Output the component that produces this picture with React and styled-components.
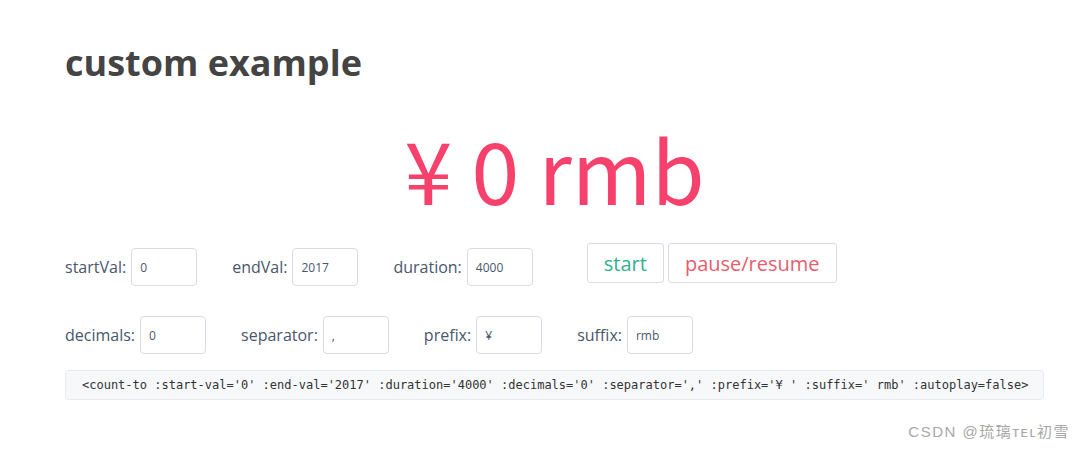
import React from "react";
import styled, { createGlobalStyle } from "styled-components";

const Global = createGlobalStyle`
  html, body { margin: 0; padding: 0; background: #fff; }
  body { font-family: "Open Sans", "Noto Sans CJK SC", sans-serif; color: #48576a; }
`;

const Page = styled.div`
  width: 1086px;
  height: 449px;
  box-sizing: border-box;
  padding: 38px 42px 0 65px;
  position: relative;
  overflow: hidden;
`;

const Title = styled.h1`
  margin: 0;
  font-size: 36px;
  line-height: 50px;
  font-weight: 700;
  color: #444;
`;

const Counter = styled.div`
  margin-top: 30px;
  text-align: center;
  font-size: 86px;
  line-height: 100px;
  color: #f6416c;
  font-family: "Noto Sans CJK SC", "Open Sans", sans-serif;
`;

const Row = styled.div`
  display: flex;
  align-items: center;
  margin-top: ${(p) => p.$top}px;
  height: 44px;
`;

const Field = styled.label`
  display: flex;
  align-items: center;
  gap: 5px;
  margin-right: 35px;
  font-size: 16px;
  color: #48576a;
`;

const Input = styled.input`
  box-sizing: border-box;
  width: 66px;
  height: 38px;
  border: 1px solid #d8dce5;
  border-radius: 4px;
  padding: 0 8px;
  font-size: 12px;
  font-family: "Open Sans", sans-serif;
  color: #48576a;
  outline: none;
`;

const Buttons = styled.div`
  display: flex;
  gap: 4px;
  margin-left: 19px;
  align-self: flex-start;
  margin-top: -2px;
`;

const Button = styled.button`
  box-sizing: border-box;
  height: 40px;
  padding: 0 16px;
  background: #fff;
  border: 1px solid #d8dce5;
  border-radius: 3px;
  font-size: 20px;
  font-family: "Open Sans", sans-serif;
  color: ${(p) => p.$color};
  cursor: pointer;
`;

const Code = styled.pre`
  margin: 13px 0 0;
  box-sizing: border-box;
  height: 30px;
  padding: 0 16px;
  display: flex;
  align-items: center;
  background: #f6f8fa;
  border: 1px solid #e8eaee;
  border-radius: 4px;
  font-family: "DejaVu Sans Mono", monospace;
  font-size: 12px;
  color: #333;
`;

const Watermark = styled.div`
  position: absolute;
  right: 16px;
  bottom: 8px;
  font-size: 15px;
  letter-spacing: 1.5px;
  color: #a8a8a8;
  font-family: "Liberation Sans", "Noto Sans CJK SC", sans-serif;
`;

export default function App() {
  return (
    <>
      <Global />
      <Page>
        <Title>custom example</Title>
        <Counter>¥ 0 rmb</Counter>
        <Row $top={27}>
          <Field>startVal:<Input defaultValue="0" /></Field>
          <Field>endVal:<Input defaultValue="2017" /></Field>
          <Field>duration:<Input defaultValue="4000" /></Field>
          <Buttons>
            <Button $color="#30b08f">start</Button>
            <Button $color="#e65d6e">pause/resume</Button>
          </Buttons>
        </Row>
        <Row $top={24}>
          <Field>decimals:<Input defaultValue="0" /></Field>
          <Field>separator:<Input defaultValue="," /></Field>
          <Field>prefix:<Input defaultValue="¥" /></Field>
          <Field>suffix:<Input defaultValue="rmb" /></Field>
        </Row>
        <Code>{"<count-to :start-val='0' :end-val='2017' :duration='4000' :decimals='0' :separator=',' :prefix='¥ ' :suffix=' rmb' :autoplay=false>"}</Code>
        <Watermark>CSDN @琉璃ᴛᴇʟ初雪</Watermark>
      </Page>
    </>
  );
}
